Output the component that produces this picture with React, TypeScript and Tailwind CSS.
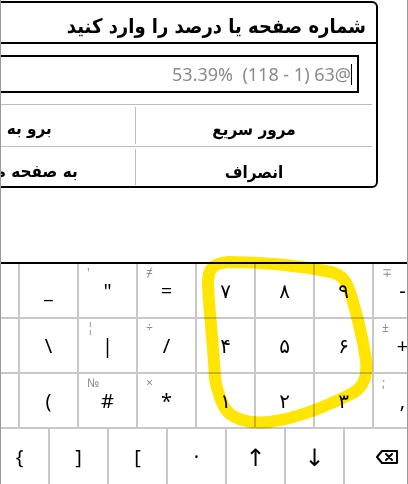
import React from 'react';

const font = { fontFamily: '"Noto Sans", "DejaVu Sans", sans-serif' };
const labelFont = { fontFamily: '"DejaVu Sans Condensed", "DejaVu Sans", sans-serif' };

type KeyDef = { main: string; alt?: string };

const rows: KeyDef[][] = [
  [
    { main: '' },
    { main: '_' },
    { main: '"', alt: "'" },
    { main: '=', alt: '≠' },
    { main: '۷' },
    { main: '۸' },
    { main: '۹' },
    { main: '-', alt: '∓' },
  ],
  [
    { main: '' },
    { main: '\\' },
    { main: '|', alt: '¦' },
    { main: '/', alt: '÷' },
    { main: '۴' },
    { main: '۵' },
    { main: '۶' },
    { main: '+', alt: '±' },
  ],
  [
    { main: '' },
    { main: '(' },
    { main: '#', alt: '№' },
    { main: '*', alt: '×' },
    { main: '۱' },
    { main: '۲' },
    { main: '۳' },
    { main: ',', alt: ';' },
  ],
];

const Key: React.FC<{ k: KeyDef }> = ({ k }) => (
  <div className="relative flex items-center justify-center bg-white text-[20px] text-black">
    {k.alt && (
      <span className="absolute left-[8px] top-[3px] text-[12px] leading-none text-[#8c8c8c]">{k.alt}</span>
    )}
    <span className="leading-none">{k.main}</span>
  </div>
);

const BackspaceIcon = () => (
  <svg width="22" height="14" viewBox="0 0 22 14" fill="none" stroke="black" strokeWidth="2" strokeLinejoin="round">
    <path d="M6 1 H21 V13 H6 L1 7 Z" />
    <path d="M10 4 L16 10 M16 4 L10 10" strokeLinecap="round" />
  </svg>
);

export default function App() {
  return (
    <div className="relative h-[484px] w-[408px] overflow-hidden border-x border-[#9a9a9a] bg-white" style={font}>
      {/* Go to page dialog */}
      <div className="h-[261px]">
        <div dir="rtl" className="ml-[-135px] mt-[1px] w-[512px] rounded-[6px] border-2 border-black bg-white">
          <div className="flex h-[41px] items-center border-b-2 border-black pr-[10px] pt-[7px] text-[20px] font-bold" style={labelFont}>
            شماره صفحه یا درصد را وارد کنید
          </div>
          <div className="py-[11px] pr-[17px]">
            <div dir="ltr" className="flex h-[38px] items-center justify-end border-2 border-black pr-[5px]">
              <span className="whitespace-pre text-[18px] text-[#8a8a8a]">53.39%  (118 - 1) 63@</span>
              <span className="h-[21px] w-px bg-black" />
            </div>
          </div>
          <div className="mx-[4px] h-px bg-[#bdbdbd]" />
          <div className="mx-[4px] grid h-[41px] grid-cols-[236px_1fr] text-[17px] font-bold" style={labelFont}>
            <div className="flex items-center justify-center pt-[9px]">مرور سریع</div>
            <div className="my-[2px] flex items-center justify-center border-r border-[#bdbdbd] pt-[7px]">برو به صفحه</div>
          </div>
          <div className="mx-[4px] h-px bg-[#bdbdbd]" />
          <div className="mx-[4px] grid h-[39px] grid-cols-[236px_1fr] text-[17px] font-bold" style={labelFont}>
            <div className="flex items-center justify-center pt-[12px]">انصراف</div>
            <div className="my-[2px] flex items-center justify-center border-r border-[#bdbdbd] pt-[10px]">به صفحه مبدأ برگرد</div>
          </div>
        </div>
      </div>

      {/* Keyboard */}
      <div className="flex h-[223px] flex-col gap-[2px] border-t-2 border-black bg-[#c8c8c8]">
        {rows.map((row, i) => (
          <div key={i} className="ml-[-40px] grid h-[53px] grid-cols-[repeat(8,57px)] gap-[2px]">
            {row.map((k, j) => (
              <Key key={j} k={k} />
            ))}
          </div>
        ))}
        <div className="ml-[-10px] grid flex-1 grid-cols-[repeat(6,57px)_84px] gap-[2px]">
          <Key k={{ main: '{' }} />
          <Key k={{ main: ']' }} />
          <Key k={{ main: '[' }} />
          <Key k={{ main: '·' }} />
          <div className="flex items-center justify-center bg-white text-[24px] leading-none">↑</div>
          <div className="flex items-center justify-center bg-white text-[24px] leading-none">↓</div>
          <div className="flex items-center justify-center bg-white">
            <BackspaceIcon />
          </div>
        </div>
      </div>

      {/* Highlighter annotation */}
      <svg className="pointer-events-none absolute left-0 top-0 mix-blend-multiply" width="408" height="484" viewBox="0 0 408 484">
        <path
          d="M214 378 C212 340 207 300 207 282 C207 268 213 263 228 262 C260 262 300 266 330 272 C342 275 346 282 350 295 C356 315 362 340 365 360 C367 378 362 388 350 394 C330 404 300 418 268 422 C245 424 228 418 222 405 C218 395 215 388 214 378 Z"
          fill="none"
          stroke="#ffe500"
          strokeWidth="12"
          strokeLinejoin="round"
        />
      </svg>
    </div>
  );
}
